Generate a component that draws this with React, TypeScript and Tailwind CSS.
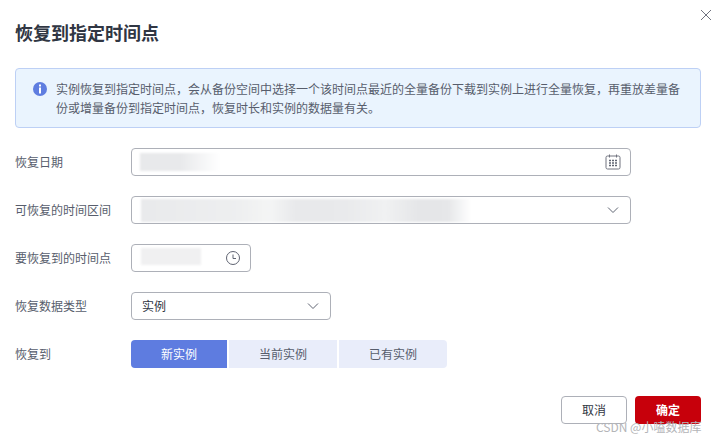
import { ReactNode } from "react";

const fontStack = "font-['Noto_Sans_CJK_SC','Noto_Sans',sans-serif]";

function Row({ label, children }: { label: string; children: ReactNode }) {
    return (
        <div className="flex items-center h-7 mb-5">
            <div className="w-[116px] text-xs text-[#575d6c]">{label}</div>
            {children}
        </div>
    );
}

function Blur({ className }: { className: string }) {
    return <div className={`blur-[1px] ${className}`} />;
}

function Chevron() {
    return (
        <svg width="12" height="8" viewBox="0 0 12 8" fill="none" stroke="#5f6472" strokeWidth="1">
            <path d="M1 1.5 L6 6.5 L11 1.5" />
        </svg>
    );
}

function CalendarIcon() {
    return (
        <svg width="16" height="16" viewBox="0 0 16 16" fill="none">
            <rect x="1" y="2" width="14" height="13" rx="1.5" stroke="#70737f" />
            <path d="M4.5 0.5 V3.5 M11.5 0.5 V3.5" stroke="#70737f" />
            <path d="M4 6.5h2M7 6.5h2M10 6.5h2M4 9h2M7 9h2M10 9h2M4 11.5h2M7 11.5h2M10 11.5h2" stroke="#5f6472" strokeWidth="1.4" />
        </svg>
    );
}

function ClockIcon() {
    return (
        <svg width="16" height="16" viewBox="0 0 16 16" fill="none" stroke="#5f6472">
            <circle cx="8" cy="8" r="6.5" />
            <path d="M8 4.5 V8.5 H11" />
        </svg>
    );
}

export default function App() {
    return (
        <div className={`relative w-[721px] h-[441px] bg-white overflow-hidden px-[15px] ${fontStack}`}>
            <div className="flex justify-end h-[20px] pr-0 pt-[9px] -mr-[15px]">
                <svg className="mr-[9px]" width="12" height="12" viewBox="0 0 12 12" stroke="#70737f" fill="none">
                    <path d="M1 1 L11 11 M11 1 L1 11" />
                </svg>
            </div>

            <h1 className="mt-[-1px] h-[27px] text-lg leading-[27px] font-bold text-[#303643]">恢复到指定时间点</h1>

            <div className="mt-[22px] w-[686px] h-[60px] flex rounded-sm border border-[#bdd0f5] bg-[#eaf4fe] pl-4 pr-5 pt-[10px]">
                <svg className="mt-[2px] mr-2 shrink-0" width="16" height="16" viewBox="0 0 16 16">
                    <circle cx="8" cy="8" r="7" fill="#5f7de0" />
                    <rect x="7" y="3.5" width="2" height="2" fill="#fff" />
                    <rect x="7" y="6.5" width="2" height="6" fill="#fff" />
                </svg>
                <p className="text-xs leading-[19px] text-[#575d6c]">
                    实例恢复到指定时间点，会从备份空间中选择一个该时间点最近的全量备份下载到实例上进行全量恢复，再重放差量备份或增量备份到指定时间点，恢复时长和实例的数据量有关。
                </p>
            </div>

            <div className="mt-5">
                <Row label="恢复日期">
                    <div className="w-[500px] h-7 flex items-center justify-between rounded-sm border border-[#adb0b8] pl-2 pr-[9px] overflow-hidden">
                        <Blur className="w-[80px] h-[18px] bg-gradient-to-r from-[#e8e9eb] via-[#e8e9eb] to-white" />
                        <CalendarIcon />
                    </div>
                </Row>
                <Row label="可恢复的时间区间">
                    <div className="w-[500px] h-7 flex items-center justify-between rounded-sm border border-[#adb0b8] pl-[9px] pr-[11px] overflow-hidden">
                        <Blur className="w-[330px] h-[23px] bg-[linear-gradient(to_right,#e9eaec_0%,#eeeff0_30%,#f4f5f5_39%,#e8e9eb_47%,#e9eaec_62%,#f0f1f2_74%,#e5e6e8_84%,#e6e7e9_93%,#ffffff_100%)]" />
                        <Chevron />
                    </div>
                </Row>
                <Row label="要恢复到的时间点">
                    <div className="w-[120px] h-7 flex items-center justify-between rounded-sm border border-[#adb0b8] pl-[9px] pr-[9px] overflow-hidden">
                        <Blur className="w-[60px] h-[17px] mb-1 bg-[#f0f0f1]" />
                        <ClockIcon />
                    </div>
                </Row>
                <Row label="恢复数据类型">
                    <div className="w-[200px] h-7 flex items-center justify-between rounded-sm border border-[#adb0b8] pl-[10px] pr-[11px] text-xs text-[#303643]">
                        <span>实例</span>
                        <Chevron />
                    </div>
                </Row>
                <Row label="恢复到">
                    <div className="flex gap-[2px] text-xs">
                        <button className="w-[96px] h-7 rounded-l-sm bg-[#5e7ce0] text-white">新实例</button>
                        <button className="w-[108px] h-7 bg-[#e9edfa] text-[#575d6c]">当前实例</button>
                        <button className="w-[108px] h-7 rounded-r-sm bg-[#e9edfa] text-[#575d6c]">已有实例</button>
                    </div>
                </Row>
            </div>

            <div className="mt-[28px] w-[686px] flex justify-end gap-2 text-xs">
                <button className="w-[66px] h-7 rounded-sm border border-[#adb0b8] text-[#303643]">取消</button>
                <button className="w-[66px] h-7 rounded-sm bg-[#c7000b] text-white font-bold">确定</button>
            </div>

            <div className="absolute left-[596px] top-[419px] text-xs leading-4 text-[#b4b5b8] whitespace-nowrap">CSDN @小嗑数据库</div>
        </div>
    );
}
